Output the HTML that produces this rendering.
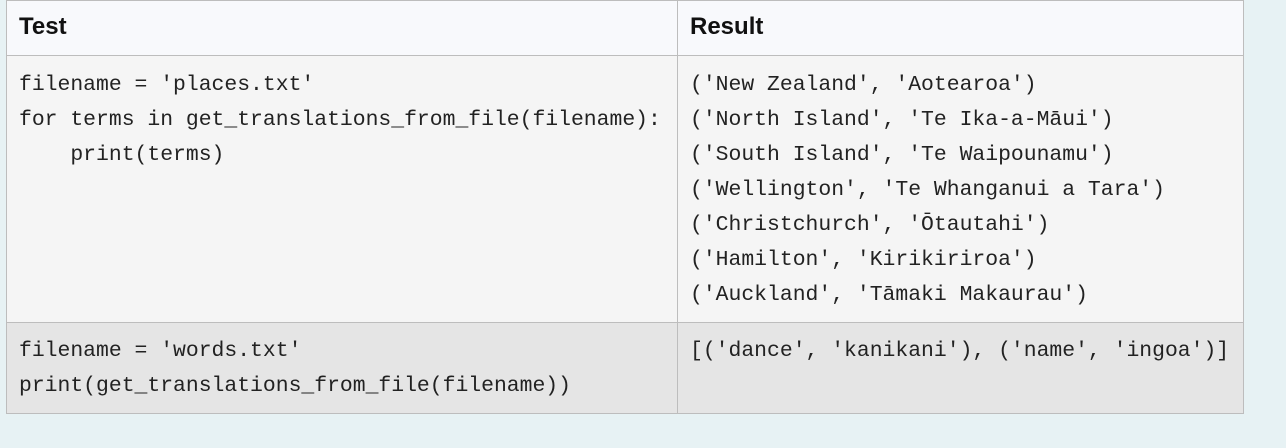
<!DOCTYPE html>
<html><head><style>
body{margin:0;background:#e7f2f4;width:1286px;height:448px;overflow:hidden}
table{position:absolute;left:6px;top:0px;border-collapse:collapse;width:1238px}
td,th{border:1px solid #bdbdbd;vertical-align:top;text-align:left;padding:0 12px}
th{background:#f8f9fc;font:bold 24px "Liberation Sans",sans-serif;color:#111;height:55px;box-sizing:border-box;padding-top:12px}
td{font:21.4px/35px "Liberation Mono",monospace;color:#222;white-space:pre}
.r1 td{background:#f5f5f5;height:267px;box-sizing:border-box;padding-top:12px}
.r2 td{background:#e5e5e5;height:91px;box-sizing:border-box;padding-top:11px}
th:first-child,td:first-child{width:671px;box-sizing:border-box}
</style></head><body>
<table>
<tr><th>Test</th><th>Result</th></tr>
<tr class="r1"><td>filename = 'places.txt'
for terms in get_translations_from_file(filename):
    print(terms)</td><td>('New Zealand', 'Aotearoa')
('North Island', 'Te Ika-a-Māui')
('South Island', 'Te Waipounamu')
('Wellington', 'Te Whanganui a Tara')
('Christchurch', 'Ōtautahi')
('Hamilton', 'Kirikiriroa')
('Auckland', 'Tāmaki Makaurau')</td></tr>
<tr class="r2"><td>filename = 'words.txt'
print(get_translations_from_file(filename))</td><td>[('dance', 'kanikani'), ('name', 'ingoa')]</td></tr>
</table>
</body></html>
